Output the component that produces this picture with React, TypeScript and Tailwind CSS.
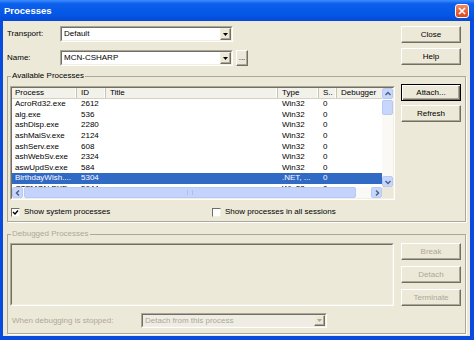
import { ReactNode } from "react";

const rows = [
  ["AcroRd32.exe", "2612", "Win32", "0"],
  ["alg.exe", "536", "Win32", "0"],
  ["ashDisp.exe", "2280", "Win32", "0"],
  ["ashMaiSv.exe", "2124", "Win32", "0"],
  ["ashServ.exe", "608", "Win32", "0"],
  ["ashWebSv.exe", "2324", "Win32", "0"],
  ["aswUpdSv.exe", "584", "Win32", "0"],
  ["BirthdayWish....", "5304", ".NET, ...", "0"],
  ["CTFMON.EXE", "5644", "Win32", "0"],
];

const Btn = ({ children, disabled, def }: { children: ReactNode; disabled?: boolean; def?: boolean }) => (
  <div
    className={
      def
        ? "flex h-[17px] w-[60px] items-center justify-center border border-black bg-[#ECE9D8] text-black shadow-[inset_1px_1px_0_white,inset_-1px_-1px_0_#716F64,inset_-2px_-2px_0_#ACA899]"
        : disabled
        ? "flex h-[17px] w-[60px] items-center justify-center border border-t-white border-l-white border-r-[#716F64] border-b-[#716F64] bg-[#ECE9D8] text-[#ACA899] shadow-[inset_-1px_-1px_0_#ACA899]"
        : "flex h-[17px] w-[60px] items-center justify-center border border-t-white border-l-white border-r-[#716F64] border-b-[#716F64] bg-[#ECE9D8] text-black shadow-[inset_-1px_-1px_0_#ACA899]"
    }
  >
    {children}
  </div>
);

const DropArrow = ({ disabled }: { disabled?: boolean }) => (
  <div className="flex w-[11px] items-center justify-center border border-t-[#F1EFE2] border-l-[#F1EFE2] border-r-[#716F64] border-b-[#716F64] bg-[#ECE9D8] shadow-[inset_-1px_-1px_0_#ACA899]">
    <svg width="5" height="3" viewBox="0 0 5 3">
      <polygon points="0,0 5,0 2.5,3" fill={disabled ? "#ACA899" : "black"} />
    </svg>
  </div>
);

const Chevron = ({ dir }: { dir: "up" | "down" | "left" | "right" }) => {
  const d = {
    up: "M1.5 5 L4 2.5 L6.5 5",
    down: "M1.5 3 L4 5.5 L6.5 3",
    left: "M5 1.5 L2.5 4 L5 6.5",
    right: "M3 1.5 L5.5 4 L3 6.5",
  }[dir];
  return (
    <svg width="8" height="8" viewBox="0 0 8 8">
      <path d={d} fill="none" stroke="#4D6185" strokeWidth="1.5" />
    </svg>
  );
};

const ScrollBtn = ({ dir }: { dir: "up" | "down" | "left" | "right" }) => (
  <div className="flex h-[11px] w-[11px] shrink-0 items-center justify-center rounded-[2px] border border-[#B7CAF5] bg-[#C8D6FB]">
    <Chevron dir={dir} />
  </div>
);

const Check = ({ checked }: { checked?: boolean }) => (
  <div className="flex h-[9px] w-[9px] items-center justify-center border border-t-[#716F64] border-l-[#716F64] border-r-[#F1EFE2] border-b-[#F1EFE2] bg-white">
    {checked && (
      <svg width="7" height="7" viewBox="0 0 7 7">
        <path d="M1 3 L3 5 L6 1.5" fill="none" stroke="black" strokeWidth="1.4" />
      </svg>
    )}
  </div>
);

const headCell = "h-full flex items-center border-r border-[#C7C5B2] shadow-[inset_-1px_0_0_white]";

export default function App() {
  return (
    <div className="flex h-[340px] w-[474px] flex-col bg-[#0A4BDF] font-['Liberation_Sans',Arial,sans-serif] text-[8px] leading-[10px] text-black">
      <div className="flex h-[21px] items-center justify-between bg-[linear-gradient(180deg,#3D8EFF_0%,#0C5FEC_18%,#0558E6_65%,#0449D6_100%)] pl-[4px] pr-[5px]">
        <span className="text-[9.5px] font-bold text-white">Processes</span>
        <div className="flex h-[14px] w-[14px] items-center justify-center rounded-[3px] border border-white bg-[linear-gradient(180deg,#F08A5F,#D9461E)]">
          <svg width="8" height="8" viewBox="0 0 8 8">
            <path d="M1 1 L7 7 M7 1 L1 7" stroke="white" strokeWidth="1.6" />
          </svg>
        </div>
      </div>

      <div className="ml-[3px] mr-[4px] mb-[4px] flex flex-1 flex-col bg-[#ECE9D8] px-[4px] pt-[5px]">
        <div className="flex">
          <div className="flex flex-1 flex-col gap-[8px]">
            <div className="flex h-[16px] items-center">
              <span className="w-[53px]">Transport:</span>
              <div className="flex h-[16px] w-[173px] border border-t-[#ACA899] border-l-[#ACA899] border-r-white border-b-white">
                <div className="flex flex-1 border border-t-[#716F64] border-l-[#716F64] border-r-[#F1EFE2] border-b-[#F1EFE2] bg-white">
                  <span className="flex flex-1 items-center pl-[2px]">Default</span>
                  <DropArrow />
                </div>
              </div>
            </div>
            <div className="flex h-[16px] items-center">
              <span className="w-[53px]">Name:</span>
              <div className="flex h-[16px] w-[173px] border border-t-[#ACA899] border-l-[#ACA899] border-r-white border-b-white">
                <div className="flex flex-1 border border-t-[#716F64] border-l-[#716F64] border-r-[#F1EFE2] border-b-[#F1EFE2] bg-white">
                  <span className="flex flex-1 items-center pl-[2px]">MCN-CSHARP</span>
                  <DropArrow />
                </div>
              </div>
              <div className="ml-[3px] flex h-[16px] w-[12px] items-end justify-center border border-t-white border-l-white border-r-[#716F64] border-b-[#716F64] pb-[2px] shadow-[inset_-1px_-1px_0_#ACA899]">
                ...
              </div>
            </div>
          </div>
          <div className="mr-[5px] flex flex-col gap-[5px]">
            <Btn>Close</Btn>
            <Btn>Help</Btn>
          </div>
        </div>

        <fieldset className="mt-[5px] border border-[#ACA899] pb-[4px] pl-[2px] pr-[4px] pt-[5px] shadow-[1px_1px_0_white]">
          <legend className="ml-[1px] px-[1px]">Available Processes</legend>
          <div className="flex items-start">
            <div className="flex h-[114px] w-[385px] border border-t-[#ACA899] border-l-[#ACA899] border-r-white border-b-white">
              <div className="flex flex-1 flex-col overflow-hidden border border-t-[#716F64] border-l-[#716F64] border-r-[#F1EFE2] border-b-[#F1EFE2] bg-white">
                <div className="flex min-h-0 flex-1">
                  <div className="flex flex-1 flex-col overflow-hidden">
                    <div className="flex h-[11px] shrink-0 border-b border-[#D6D2C2] bg-[#F2F1EA]">
                      <div className={`w-[65px] pl-[3px] ${headCell}`}>Process</div>
                      <div className={`w-[29px] pl-[4px] ${headCell}`}>ID</div>
                      <div className={`w-[172px] pl-[4px] ${headCell}`}>Title</div>
                      <div className={`w-[41px] pl-[4px] ${headCell}`}>Type</div>
                      <div className={`w-[18px] pl-[4px] ${headCell}`}>S..</div>
                      <div className="flex h-full flex-1 items-center pl-[4px]">Debugger</div>
                    </div>
                    {rows.map((r, i) => (
                      <div
                        key={r[0]}
                        className={
                          i === 7
                            ? "flex h-[10.6px] shrink-0 items-center bg-[#316AC5] text-white"
                            : "flex h-[10.6px] shrink-0 items-center"
                        }
                      >
                        <span className="w-[65px] pl-[3px]">{r[0]}</span>
                        <span className="w-[29px] pl-[4px]">{r[1]}</span>
                        <span className="w-[172px]" />
                        <span className="w-[41px] pl-[4px]">{r[2]}</span>
                        <span className="w-[18px] pl-[4px]">{r[3]}</span>
                      </div>
                    ))}
                  </div>
                  <div className="flex w-[11px] flex-col bg-[#FAF9F5]">
                    <ScrollBtn dir="up" />
                    <div className="mt-[1px] h-[15px] rounded-[2px] border border-[#B7CAF5] bg-[#C8D6FB]" />
                    <div className="flex-1" />
                    <ScrollBtn dir="down" />
                  </div>
                </div>
                <div className="flex h-[11px] shrink-0 bg-[#FAF9F5]">
                  <ScrollBtn dir="left" />
                  <div className="ml-[1px] flex w-[332px] items-center justify-center rounded-[2px] border border-[#B7CAF5] bg-[#C3D3FB]">
                    <div className="h-[5px] w-[6px] border-x border-[#A9BEF2]" />
                  </div>
                  <div className="flex-1" />
                  <ScrollBtn dir="right" />
                  <div className="w-[11px] bg-[#ECE9D8]" />
                </div>
              </div>
            </div>
            <div className="-mt-[2px] ml-auto flex flex-col gap-[4px]">
              <Btn def>Attach...</Btn>
              <Btn>Refresh</Btn>
            </div>
          </div>
          <div className="mt-[7px] flex h-[10px] items-center">
            <div className="ml-[1px] flex w-[201px] items-center gap-[4px]">
              <Check checked />
              <span>Show system processes</span>
            </div>
            <div className="flex items-center gap-[4px]">
              <Check />
              <span>Show processes in all sessions</span>
            </div>
          </div>
        </fieldset>

        <fieldset className="mt-[7px] border border-[#ACA899] pb-[5px] pl-[2px] pr-[4px] pt-[4px] shadow-[1px_1px_0_white]">
          <legend className="ml-[1px] px-[1px] text-[#ACA899]">Debugged Processes</legend>
          <div className="flex items-start">
            <div className="h-[63px] w-[384px] border border-t-[#ACA899] border-l-[#ACA899] border-r-white border-b-white">
              <div className="h-full w-full border border-t-[#716F64] border-l-[#716F64] border-r-[#F1EFE2] border-b-[#F1EFE2] bg-[#ECE9D8]" />
            </div>
            <div className="ml-auto flex flex-col gap-[6px]">
              <Btn disabled>Break</Btn>
              <Btn disabled>Detach</Btn>
              <Btn disabled>Terminate</Btn>
            </div>
          </div>
          <div className="mt-[7px] flex h-[15px] items-center text-[#ACA899]">
            <span className="ml-[2px] w-[129px]">When debugging is stopped:</span>
            <div className="flex h-[15px] w-[186px] border border-t-[#ACA899] border-l-[#ACA899] border-r-white border-b-white">
              <div className="flex flex-1 border border-t-[#716F64] border-l-[#716F64] border-r-[#F1EFE2] border-b-[#F1EFE2] bg-[#EFEDE3]">
                <span className="flex flex-1 items-center pl-[2px]">Detach from this process</span>
                <DropArrow disabled />
              </div>
            </div>
          </div>
        </fieldset>
      </div>
    </div>
  );
}
